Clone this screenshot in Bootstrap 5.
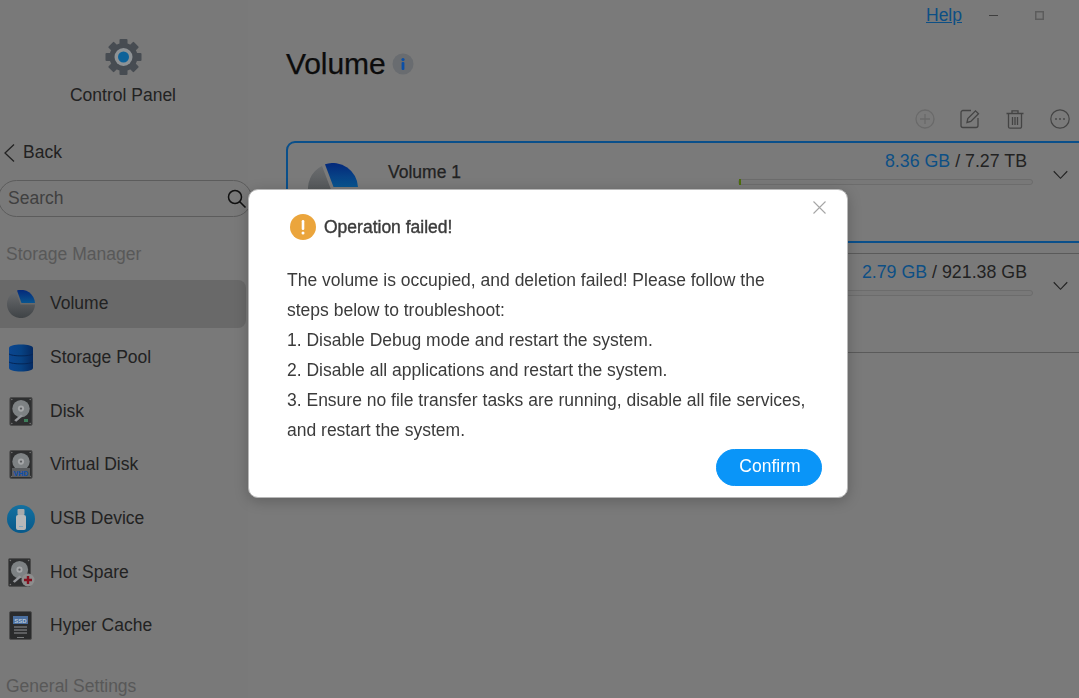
<!DOCTYPE html>
<html lang="en">
<head>
<meta charset="utf-8">
<title>Volume</title>
<link href="https://cdn.jsdelivr.net/npm/bootstrap@5.3.0/dist/css/bootstrap.min.css" rel="stylesheet">
<style>
html,body{height:100%;overflow:hidden}
body{background:#7a7a7a;font-family:"Liberation Sans",Arial,sans-serif;font-size:17.5px;color:#222;line-height:1.2}
.defs-holder{position:absolute;width:0;height:0}
.shell{height:698px;overflow:hidden}
.side{width:248px;flex:none;background:#797979}
.brand{height:106px;padding:39px 2px 0 0}
.brand-name{margin-top:10px;line-height:21px}
.back-row{height:21px;margin-top:36px;padding-left:3px;gap:8px;line-height:21px}
.search-box{width:254px;height:37px;margin:17px 0 0 -2px;border:1px solid #5c5c5c;border-radius:19px;padding:0 4px 0 9px;color:#404040;position:relative;z-index:0}
.group-label{color:#585858;line-height:21px;margin:0 0 0 6px}
.group-one{margin-top:27px}
.group-two{margin-top:26px}
.menu{gap:6px;margin-top:15px;width:246px}
.menu-row{height:47.7px;padding-left:7px;gap:15px;border-radius:0 8px 8px 0;color:#222}
.menu-row.on{background:#696969}
.menu-row svg{flex:none}
.main{flex:1 1 0;min-width:0;padding-left:38px;position:relative}
.topline{height:30px}
.help{color:#0d4f85;position:absolute;left:678px;top:5px;line-height:21px}
.winbtn{position:absolute}
.win-min{left:741px;top:15px}
.win-max{left:787px;top:11px}
.page-title{font-size:30px;font-weight:400;color:#0c0c0c;margin:0;line-height:36px;letter-spacing:-.1px;-webkit-text-stroke:.25px #0c0c0c}
.title-row{margin-top:16px;gap:7px;height:36px}
.tools{height:34px;margin-top:20px;margin-bottom:5px;gap:25px;padding-right:9px}
.vol{margin-right:-40px;position:relative}
.vol-one{height:102px;border:2px solid #0a4f8a;border-radius:9px}
.vol-two{height:100px;margin-top:10px;border-top:1px solid #5a5a5a;border-bottom:1px solid #5a5a5a}
.vol-name{position:absolute;left:100px;top:19px;line-height:21px;-webkit-text-stroke:.25px #222}
.pie-pos{position:absolute;left:20px;top:20px}
.cap{position:absolute;right:90px;top:8px;line-height:21px;white-space:nowrap;font-size:17.8px}
.vol-two .cap{right:92px;top:8px}
.cap b{font-weight:400;color:#0d4f85}
.gauge{position:absolute;left:450px;top:36px;width:295px;height:6px;border:1px solid #6c6c6c;border-radius:3px;background:#787878}
.vol-two .gauge{left:452px}
.gauge i{display:block;width:2px;height:6px;margin-top:-1px;background:#4d6d0c}
.chev{position:absolute;left:765px;top:27px}
.vol-two .chev{left:767px}
.dialog{position:fixed;left:248px;top:189px;width:600px;height:309px;background:#fff;border:1px solid #b8b8b8;border-radius:10px;box-shadow:0 3px 14px rgba(0,0,0,.22);color:#3b3b3b;z-index:1055;padding:22px 25px 0 38px}
.dialog-head{height:30px;gap:8px;margin-left:3px;line-height:30px;-webkit-text-stroke:.4px #3b3b3b}
.dialog-body{margin-top:23px;line-height:30.1px}
.x-btn{position:absolute;right:21px;top:11px;background:none;border:0;padding:0;line-height:0}
.ok-btn{--bs-btn-bg:#0a95f8;--bs-btn-border-color:#0a95f8;--bs-btn-color:#fff;--bs-btn-hover-bg:#0a95f8;--bs-btn-hover-color:#fff;width:106px;height:37px;border-radius:19px;padding:0 0 0 2px;font-size:17.5px;line-height:1}
.dialog-foot{margin-top:3px}
</style>
</head>
<body>
<svg class="defs-holder" aria-hidden="true">
<defs>
<linearGradient id="gBlue" x1="0" y1="0" x2="0" y2="1"><stop offset="0" stop-color="#04287a"/><stop offset="1" stop-color="#09558f"/></linearGradient>
<linearGradient id="gGrey" x1="0" y1="0" x2="0" y2="1"><stop offset="0" stop-color="#6a6c6e"/><stop offset="1" stop-color="#3f4346"/></linearGradient>
<linearGradient id="gCyl" x1="0" y1="0" x2="1" y2="0"><stop offset="0" stop-color="#0b4690"/><stop offset=".5" stop-color="#074283"/><stop offset="1" stop-color="#052a62"/></linearGradient>
<linearGradient id="gUsb" x1="0" y1="0" x2="0" y2="1"><stop offset="0" stop-color="#1370a0"/><stop offset="1" stop-color="#07598a"/></linearGradient>
<symbol id="hdd" viewBox="0 0 24 30">
<rect x=".5" y=".5" width="23" height="29" rx="1.5" fill="#2e2f30" stroke="#4c4c4c"/>
<circle cx="2.5" cy="2.5" r=".8" fill="#777"/><circle cx="21.5" cy="2.5" r=".8" fill="#777"/><circle cx="2.5" cy="27.5" r=".8" fill="#777"/><circle cx="21.5" cy="27.5" r=".8" fill="#777"/>
<circle cx="12" cy="12" r="9" fill="#7e8284"/><circle cx="12" cy="12" r="3.2" fill="#a4a6a8"/><circle cx="12" cy="12" r="1.2" fill="#5b5d60"/>
<path d="M5 24l7-6 2 1.600-7 6z" fill="#94969a"/>
</symbol>
</defs>
</svg>

<div class="shell d-flex">
  <aside class="side">
    <div class="brand d-flex flex-column align-items-center">
      <svg width="37" height="37" viewBox="0 0 36 36" aria-hidden="true">
        <g fill="#474c52"><circle cx="18" cy="18" r="14"/>
          <rect x="14" y="0" width="8" height="8" rx="1"/><rect x="14" y="28" width="8" height="8" rx="1"/><rect x="0" y="14" width="8" height="8" rx="1"/><rect x="28" y="14" width="8" height="8" rx="1"/>
          <g transform="rotate(45 18 18)"><rect x="14" y="0" width="8" height="8" rx="1"/><rect x="14" y="28" width="8" height="8" rx="1"/><rect x="0" y="14" width="8" height="8" rx="1"/><rect x="28" y="14" width="8" height="8" rx="1"/></g>
        </g>
        <circle cx="18" cy="18" r="9" fill="#8e9295"/><circle cx="18" cy="18" r="5.500" fill="#0e6299"/>
      </svg>
      <div class="brand-name">Control Panel</div>
    </div>
    <div class="back-row d-flex align-items-center">
      <svg width="12" height="20" viewBox="0 0 12 20" aria-hidden="true"><path d="M11 1.500L2 10l9 8.500" fill="none" stroke="#222" stroke-width="1.300"/></svg>
      <span>Back</span>
    </div>
    <div class="search-box d-flex align-items-center justify-content-between">
      <span>Search</span>
      <svg width="20" height="20" viewBox="0 0 20 20" aria-hidden="true"><circle cx="8" cy="8" r="6.500" fill="none" stroke="#111" stroke-width="1.500"/><path d="M12.500 12.500l6 6" stroke="#111" stroke-width="1.600"/></svg>
    </div>
    <div class="group-label group-one">Storage Manager</div>
    <div class="menu d-flex flex-column">
      <div class="menu-row on d-flex align-items-center">
        <svg width="28" height="28" viewBox="0 0 28 28" aria-hidden="true"><path d="M8.500 1.200L13.500 14.500H28A14 14 0 1 1 8.500 1.200z" fill="url(#gGrey)"/><path d="M10 .4A14 14 0 0 1 28 13H14.500z" fill="url(#gBlue)"/></svg>
        <span>Volume</span>
      </div>
      <div class="menu-row d-flex align-items-center">
        <svg width="28" height="28" viewBox="0 0 28 28" aria-hidden="true"><path d="M2 4c0-2 5-3.500 12-3.500S26 2 26 4v20c0 2-5 3.500-12 3.500S2 26 2 24z" fill="url(#gCyl)"/><path d="M2 10c3 2.500 21 2.500 24 0M2 18c3 2.500 21 2.500 24 0" fill="none" stroke="#052656" stroke-width="1"/></svg>
        <span>Storage Pool</span>
      </div>
      <div class="menu-row d-flex align-items-center">
        <svg width="28" height="29" aria-hidden="true"><use href="#hdd" x="2" width="24" height="29"/><rect x="17" y="22" width="4" height="3" fill="#3e7d5a"/></svg>
        <span>Disk</span>
      </div>
      <div class="menu-row d-flex align-items-center">
        <svg width="28" height="29" aria-hidden="true"><use href="#hdd" x="2" width="24" height="29"/><rect x="5" y="18" width="18" height="9" fill="#5a5d60"/><text x="14" y="25.500" text-anchor="middle" font-family="Liberation Sans,sans-serif" font-size="7" font-weight="700" fill="#0d4fb0">VHD</text></svg>
        <span>Virtual Disk</span>
      </div>
      <div class="menu-row d-flex align-items-center">
        <svg width="28" height="28" viewBox="0 0 28 28" aria-hidden="true"><circle cx="14" cy="14" r="14" fill="url(#gUsb)"/><rect x="10.500" y="4" width="7" height="6" rx="1" fill="#a8aaab"/><rect x="9" y="10" width="10" height="15" rx="2" fill="#b6b8b9"/><rect x="12" y="21" width="4" height="1" fill="#7ea7c0"/></svg>
        <span>USB Device</span>
      </div>
      <div class="menu-row d-flex align-items-center">
        <svg width="28" height="29" aria-hidden="true"><use href="#hdd" x="1" width="23" height="29"/><circle cx="21" cy="22" r="6.500" fill="#8d8d8d"/><path d="M19.800 18h2.400v2.800H25v2.400h-2.800V26h-2.400v-2.800H17v-2.400h2.800z" fill="#84101f"/></svg>
        <span>Hot Spare</span>
      </div>
      <div class="menu-row d-flex align-items-center">
        <svg width="28" height="29" viewBox="0 0 28 29" aria-hidden="true"><rect x="2.500" y=".5" width="22" height="28" rx="1.500" fill="#2a2b2c" stroke="#4e4e4e"/><rect x="6" y="5" width="15" height="8" fill="#4a6e9e"/><text x="13.500" y="11.500" text-anchor="middle" font-family="Liberation Sans,sans-serif" font-size="6" font-weight="700" fill="#b9c6d6">SSD</text><path d="M7 16h13M7 19h13M7 22h13" stroke="#8f9193" stroke-width="1"/><path d="M10 26.500h7" stroke="#77797b" stroke-width="1"/></svg>
        <span>Hyper Cache</span>
      </div>
    </div>
    <div class="group-label group-two">General Settings</div>
  </aside>

  <main class="main">
    <a class="help" href="#">Help</a>
    <svg class="winbtn win-min" width="9" height="2" aria-hidden="true"><rect width="9" height="1" fill="#3f3f3f"/></svg>
    <svg class="winbtn win-max" width="9" height="9" aria-hidden="true"><rect x=".75" y=".75" width="7.500" height="7.500" fill="none" stroke="#5c5c5c" stroke-width="1.500"/></svg>
    <div class="topline"></div>
    <div class="title-row d-flex align-items-center">
      <h1 class="page-title">Volume</h1>
      <svg width="22" height="22" viewBox="0 0 22 22" aria-hidden="true"><circle cx="11" cy="11" r="10.500" fill="#696c70"/><circle cx="11" cy="6.500" r="1.600" fill="#0b4fa6"/><rect x="9.600" y="9" width="2.800" height="8" rx="1" fill="#0b4fa6"/></svg>
    </div>
    <div class="tools d-flex align-items-center justify-content-end">
      <svg width="20" height="20" viewBox="0 0 20 20" aria-hidden="true"><circle cx="10" cy="10" r="9" fill="none" stroke="#6a6a6a" stroke-width="1.300"/><path d="M10 5v10M5 10h10" stroke="#6a6a6a" stroke-width="1.300"/></svg>
      <svg width="20" height="20" viewBox="0 0 20 20" aria-hidden="true"><path d="M11 1.500H3A2 2 0 0 0 1 3.500v13a2 2 0 0 0 2 2h13a2 2 0 0 0 2-2V9" fill="none" stroke="#444" stroke-width="1.300"/><path d="M7 13.500l.8-4L15.500 1.800l3 2.900-7.700 7.800z" fill="none" stroke="#444" stroke-width="1.300"/></svg>
      <svg width="20" height="20" viewBox="-1 0 20 20" aria-hidden="true"><path d="M.5 4.500h17M6 4.500V1.800h6v2.700M2.500 4.500v13.200a1.500 1.500 0 0 0 1.500 1.500h10a1.500 1.500 0 0 0 1.500-1.500V4.500" fill="none" stroke="#444" stroke-width="1.300"/><path d="M6.500 8v8M9 8v8M11.500 8v8" stroke="#444" stroke-width="1.300"/></svg>
      <svg width="20" height="20" viewBox="0 0 20 20" aria-hidden="true"><circle cx="10" cy="10" r="9.200" fill="none" stroke="#444" stroke-width="1.200"/><circle cx="6" cy="10" r=".9" fill="#444"/><circle cx="10" cy="10" r=".9" fill="#444"/><circle cx="14" cy="10" r=".9" fill="#444"/></svg>
    </div>
    <section class="vol vol-one">
      <svg class="pie-pos" width="50" height="50" viewBox="0 0 50 50" aria-hidden="true"><path d="M14 3L23 26.500H50A25 25 0 1 1 14 3z" fill="url(#gGrey)"/><path d="M17 1.300A25 25 0 0 1 50 24H25.500z" fill="url(#gBlue)"/></svg>
      <div class="vol-name">Volume 1</div>
      <div class="cap"><b>8.36 GB</b> / 7.27 TB</div>
      <div class="gauge"><i></i></div>
      <svg class="chev" width="15" height="10" viewBox="0 0 16 10" aria-hidden="true"><path d="M.8 1l7.200 7.500L15.200 1" fill="none" stroke="#222" stroke-width="1.200"/></svg>
    </section>
    <section class="vol vol-two">
      <div class="cap"><b>2.79 GB</b> / 921.38 GB</div>
      <div class="gauge"></div>
      <svg class="chev" width="15" height="10" viewBox="0 0 16 10" aria-hidden="true"><path d="M.8 1l7.200 7.500L15.200 1" fill="none" stroke="#222" stroke-width="1.200"/></svg>
    </section>
  </main>
</div>

<div class="dialog" role="dialog" aria-modal="true">
  <button class="x-btn" type="button" aria-label="Close"><svg width="13" height="13" viewBox="0 0 13 13" aria-hidden="true"><path d="M.5.5l12 12M12.500.5l-12 12" stroke="#a6a6a6" stroke-width="1.100"/></svg></button>
  <div class="dialog-head d-flex align-items-center">
    <svg width="26" height="26" viewBox="0 0 26 26" aria-hidden="true"><circle cx="13" cy="13" r="13" fill="#eba53c"/><rect x="11.700" y="6" width="2.600" height="10" rx="1.200" fill="#fff"/><circle cx="13" cy="19" r="1.500" fill="#fff"/></svg>
    <span>Operation failed!</span>
  </div>
  <div class="dialog-body">The volume is occupied, and deletion failed! Please follow the<br>steps below to troubleshoot:<br>1. Disable Debug mode and restart the system.<br>2. Disable all applications and restart the system.<br>3. Ensure no file transfer tasks are running, disable all file services,<br>and restart the system.</div>
  <div class="dialog-foot d-flex justify-content-end"><button class="btn ok-btn" type="button">Confirm</button></div>
</div>
<script src="https://cdn.jsdelivr.net/npm/bootstrap@5.3.0/dist/js/bootstrap.bundle.min.js"></script>
</body>
</html>
